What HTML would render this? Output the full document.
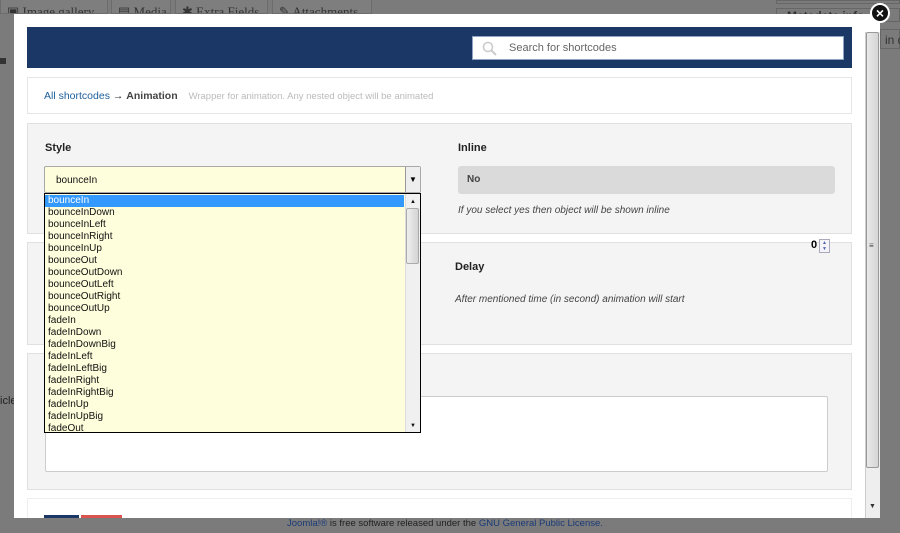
<!DOCTYPE html>
<html><head><meta charset="utf-8"><style>
*{box-sizing:border-box;margin:0;padding:0}
body{width:900px;height:533px;background:#7b7b7b;position:relative;overflow:hidden;font-family:"Liberation Sans",sans-serif}
.abs{position:absolute}
.tab{position:absolute;top:0;height:14px;border:1px solid #6c6c6c;border-top:0;background:#7e7e7e;font-family:"Liberation Serif",serif;font-size:13px;color:#333;line-height:24px;overflow:hidden;padding-left:6px;white-space:nowrap}
.modal{left:14px;top:14px;width:866px;height:504px;background:#fff;overflow:hidden}
.panel{position:absolute;left:13px;width:825px;background:#f4f4f4;border:1px solid #e0e0e0}
.lbl{position:absolute;font-size:11px;font-weight:bold;color:#222}
.help{position:absolute;font-size:10px;font-style:italic;color:#444}
.list div{height:12px;line-height:12px;font-size:10px;padding-left:3px;color:#111}
</style></head><body>
<div class="tab" style="left:0;width:108px">▣ Image gallery</div>
<div class="tab" style="left:111px;width:60px">▤ Media</div>
<div class="tab" style="left:175px;width:93px">✱ Extra Fields</div>
<div class="tab" style="left:272px;width:100px">✎ Attachments</div>
<div class="abs" style="left:776px;top:0;width:124px;height:4px;border:1px solid #666"></div>
<div class="abs" style="left:776px;top:8px;width:124px;height:14px;border:1px solid #666;font-size:12px;font-weight:bold;color:#333;line-height:14px;padding-left:10px;white-space:nowrap">Metadata info</div>
<div class="abs" style="left:880px;top:29px;width:20px;height:20px;border:1px solid #666;font-size:12px;color:#333;line-height:20px;padding-left:4px;white-space:nowrap">in d</div>
<div class="abs" style="left:0;top:395px;font-size:11px;color:#222">icle</div>
<div class="abs" style="left:0;top:58px;width:6px;height:6px;background:#333"></div>

<div class="abs modal">
  <div class="abs" style="left:13px;top:13px;width:825px;height:41px;background:#1b3766"></div>
  <div class="abs" style="left:458px;top:22px;width:372px;height:24px;background:#fff;border:1px solid #8fa2c2">
    <svg class="abs" style="left:9px;top:4px" width="15" height="15"><circle cx="6" cy="6" r="4.5" fill="none" stroke="#ccc" stroke-width="1.6"/><path d="M9.5 9.5L14 14" stroke="#ccc" stroke-width="2"/></svg>
    <div class="abs" style="left:36px;top:5px;font-size:11px;color:#666">Search for shortcodes</div>
  </div>
  <div class="abs" style="left:13px;top:63px;width:825px;height:37px;border:1px solid #e6e6e6;background:#fff">
    <div class="abs" style="left:16px;top:12px;font-size:10.5px;white-space:nowrap"><span style="color:#1d5e9a">All shortcodes</span> <span style="color:#333">→</span> <b style="color:#444">Animation</b> <span style="color:#bbb;font-size:9.5px;margin-left:8px">Wrapper for animation. Any nested object will be animated</span></div>
  </div>
  <div class="panel" style="top:109px;height:111px">
    <div class="lbl" style="left:17px;top:18px">Style</div>
    <div class="lbl" style="left:430px;top:18px">Inline</div>
    <div class="abs" style="left:16px;top:42px;width:377px;height:27px;background:#fefedc;border:1px solid #a8a8a8;border-radius:2px">
      <div class="abs" style="left:11px;top:8px;font-size:10px;color:#111">bounceIn</div>
      <div class="abs" style="right:0;top:0;width:15px;height:25px;background:#eee;border-left:1px solid #999;font-size:8px;text-align:center;line-height:25px">▼</div>
    </div>
    <div class="abs" style="left:430px;top:42px;width:377px;height:28px;background:#dadada;border-radius:3px;font-size:10px;font-weight:bold;color:#444;line-height:28px;padding-left:9px">No</div>
    <div class="help" style="left:430px;top:81px">If you select yes then object will be shown inline</div>
  </div>
  <div class="panel" style="top:228px;height:103px">
    <div class="lbl" style="left:427px;top:18px">Delay</div>
    <div class="help" style="left:427px;top:51px">After mentioned time (in second) animation will start</div>
  </div>
  <div class="abs" style="left:797px;top:225px;font-size:11px;font-weight:bold">0</div>
  <div class="abs" style="left:805px;top:225px;width:11px;height:14px;border:1px solid #aab;background:#f4f4f8;font-size:5px;color:#56a;text-align:center;line-height:6px">▲<br>▼</div>
  <div class="panel" style="top:339px;height:137px">
    <div class="abs" style="left:17px;top:42px;width:783px;height:76px;background:#fff;border:1px solid #ccc;border-radius:2px"></div>
  </div>
  <div class="abs" style="left:13px;top:484px;width:825px;height:30px;border:1px solid #eee;background:#fff"></div>
  <div class="abs" style="left:30px;top:501px;width:35px;height:4px;background:#1b3766"></div>
  <div class="abs" style="left:67px;top:501px;width:41px;height:4px;background:#d9534f"></div>
  <div class="abs" style="left:851px;top:18px;width:15px;height:486px;background:#eee;border-left:1px solid #ccc"></div>
  <div class="abs" style="left:852px;top:18px;width:13px;height:436px;background:linear-gradient(90deg,#e8e8e8,#d6d6d6);border:1px solid #999;border-radius:2px"></div>
  <div class="abs" style="left:855px;top:227px;font-size:8px;color:#444">≡</div>
  <div class="abs" style="left:855px;top:489px;font-size:7px;color:#333">▼</div>
  <div class="abs list" style="left:30px;top:179px;width:377px;height:240px;background:#fefedc;border:1px solid #000;overflow:hidden">
    <div style="background:#3399ff;color:#fff;margin-top:1px;width:359px">bounceIn</div>
    <div>bounceInDown</div><div>bounceInLeft</div><div>bounceInRight</div><div>bounceInUp</div><div>bounceOut</div><div>bounceOutDown</div><div>bounceOutLeft</div><div>bounceOutRight</div><div>bounceOutUp</div><div>fadeIn</div><div>fadeInDown</div><div>fadeInDownBig</div><div>fadeInLeft</div><div>fadeInLeftBig</div><div>fadeInRight</div><div>fadeInRightBig</div><div>fadeInUp</div><div>fadeInUpBig</div><div>fadeOut</div>
    <div class="abs" style="right:0;top:0;width:15px;height:238px;background:#f0f0f0;border-left:1px solid #ddd"></div>
    <div class="abs" style="right:1px;top:14px;width:13px;height:56px;background:linear-gradient(90deg,#eee,#d4d4d4);border:1px solid #aaa;border-radius:2px"></div>
    <div class="abs" style="right:4px;top:2px;font-size:6px">▲</div>
    <div class="abs" style="right:4px;top:226px;font-size:6px">▼</div>
  </div>
</div>
<div class="abs" style="left:870px;top:3px;width:20px;height:20px;border-radius:50%;background:#111;border:2px solid #fff;color:#fff;font-size:14px;font-weight:bold;text-align:center;line-height:16px">×</div>
<div class="abs" style="left:287px;top:518px;font-size:9.5px;color:#222;white-space:nowrap"><span style="color:#1b3b78">Joomla!®</span> is free software released under the <span style="color:#1b3b78">GNU General Public License.</span></div>
</body></html>
